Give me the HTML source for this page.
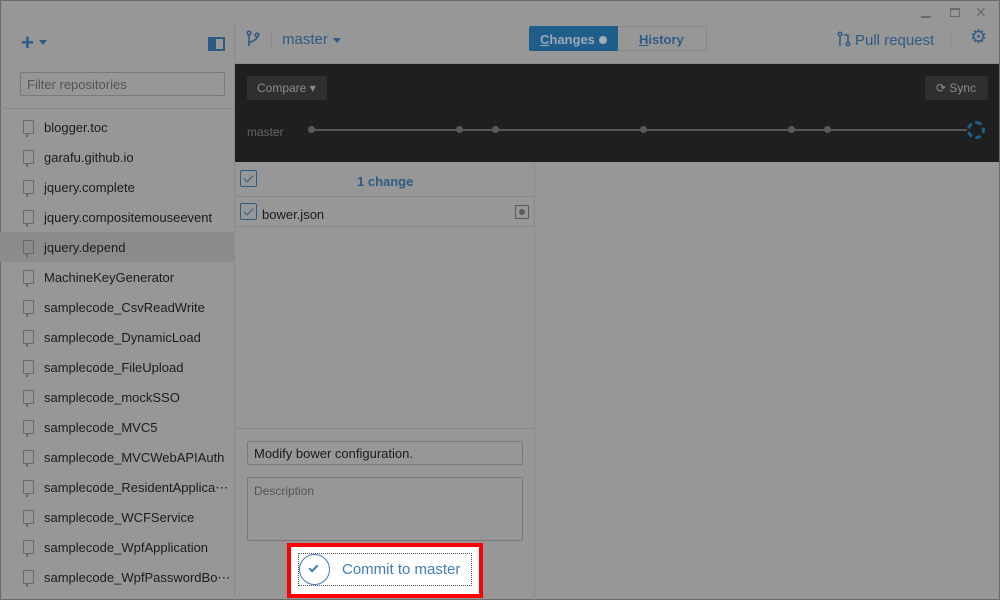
<!DOCTYPE html>
<html><head><style>
*{margin:0;padding:0;box-sizing:border-box}
body{width:1000px;height:600px;background:#979797;font-family:"Liberation Sans",sans-serif;position:relative;overflow:hidden;color:#1c1c1c;font-size:13px}
.abs{position:absolute}
.win{left:0;top:0;width:1000px;height:600px;border:1px solid #6a6a6a}
.row{position:absolute;left:0;width:234px;height:30px;line-height:31px;padding-left:44px;white-space:nowrap}
.row .ic{position:absolute;left:23px;top:8px;width:11px;height:14px;border:1px solid #6a6a6a;border-radius:1px}
.row .ic:after{content:"";position:absolute;left:2px;bottom:-4px;width:2px;height:3px;background:#6a6a6a}
.tick{position:absolute;width:17px;height:17px;border:1px solid #2e5a86;border-radius:2px}
.tick:after{content:"";position:absolute;left:5px;top:2px;width:4px;height:8px;border:solid #2e5a86;border-width:0 1.5px 1.5px 0;transform:rotate(45deg)}
.dot{position:absolute;width:7px;height:7px;border-radius:50%;background:#5a5a5a;top:126px}
</style></head><body>
<div class="abs win"></div>
<div class="abs" style="left:921px;top:16px;width:10px;height:2px;background:#6b6b6b"></div>
<div class="abs" style="left:950px;top:8px;width:10px;height:9px;border:1px solid #6b6b6b;border-top-width:2px"></div>
<div class="abs" style="left:975px;top:4px;font-size:14px;color:#6b6b6b">✕</div>
<div class="abs" style="left:234px;top:22px;width:1px;height:578px;background:#8a8a8a"></div>
<div class="abs" style="left:21px;top:32px;font-size:22px;font-weight:bold;color:#2e5a86;line-height:22px">+</div>
<div class="abs" style="left:39px;top:40px;border:4px solid transparent;border-top:5px solid #2e5a86"></div>
<div class="abs" style="left:208px;top:37px;width:17px;height:14px;border:2px solid #2e5a86"><div style="width:6px;height:100%;background:#2e5a86"></div></div>
<div class="abs" style="left:20px;top:72px;width:205px;height:24px;border:1px solid #7a7a7a;border-radius:2px;padding-left:6px;line-height:23px;color:#555">Filter repositories</div>
<div class="abs" style="left:0;top:108px;width:234px;height:1px;background:#888"></div>
<div class="abs" style="left:0;top:232px;width:234px;height:30px;background:#8b8b8b"></div>
<div class="row" style="top:112px"><span class="ic"></span>blogger.toc</div>
<div class="row" style="top:142px"><span class="ic"></span>garafu.github.io</div>
<div class="row" style="top:172px"><span class="ic"></span>jquery.complete</div>
<div class="row" style="top:202px"><span class="ic"></span>jquery.compositemouseevent</div>
<div class="row" style="top:232px"><span class="ic"></span>jquery.depend</div>
<div class="row" style="top:262px"><span class="ic"></span>MachineKeyGenerator</div>
<div class="row" style="top:292px"><span class="ic"></span>samplecode_CsvReadWrite</div>
<div class="row" style="top:322px"><span class="ic"></span>samplecode_DynamicLoad</div>
<div class="row" style="top:352px"><span class="ic"></span>samplecode_FileUpload</div>
<div class="row" style="top:382px"><span class="ic"></span>samplecode_mockSSO</div>
<div class="row" style="top:412px"><span class="ic"></span>samplecode_MVC5</div>
<div class="row" style="top:442px"><span class="ic"></span>samplecode_MVCWebAPIAuth</div>
<div class="row" style="top:472px"><span class="ic"></span>samplecode_ResidentApplica⋯</div>
<div class="row" style="top:502px"><span class="ic"></span>samplecode_WCFService</div>
<div class="row" style="top:532px"><span class="ic"></span>samplecode_WpfApplication</div>
<div class="row" style="top:562px"><span class="ic"></span>samplecode_WpfPasswordBo⋯</div>
<svg class="abs" style="left:246px;top:30px" width="14" height="18"><g stroke="#2e5a86" stroke-width="1.6" fill="none"><circle cx="3" cy="3" r="1.8"/><circle cx="11" cy="5" r="1.8"/><path d="M3 5v11M11 7c0 4-8 4-8 7"/></g></svg>
<div class="abs" style="left:271px;top:30px;width:1px;height:18px;background:#8a8a8a"></div>
<div class="abs" style="left:282px;top:31px;font-size:15px;color:#2e5a86">master</div>
<div class="abs" style="left:333px;top:38px;border:4px solid transparent;border-top:5px solid #2e5a86"></div>
<div class="abs" style="left:529px;top:26px;width:178px;height:25px;border:1px solid #888;border-radius:2px"></div>
<div class="abs" style="left:529px;top:26px;width:89px;height:25px;background:#1f5e8b;border-radius:2px 0 0 2px;line-height:27px;padding-left:11px;font-weight:bold;color:#9ba9b7"><u>C</u>hanges <span style="display:inline-block;width:8px;height:8px;border-radius:50%;background:#a6adb5"></span></div>
<div class="abs" style="left:639px;top:26px;line-height:27px;font-weight:bold;color:#2e5a86"><u>H</u>istory</div>
<svg class="abs" style="left:837px;top:31px" width="14" height="16"><g stroke="#2e5a86" stroke-width="1.5" fill="none"><circle cx="3" cy="3" r="1.8"/><circle cx="11" cy="13" r="1.8"/><path d="M3 5v10M11 11V4H7"/></g></svg>
<div class="abs" style="left:855px;top:32px;font-size:15px;color:#2e5a86">Pull request</div>
<div class="abs" style="left:950px;top:30px;width:1px;height:18px;background:#8a8a8a"></div>
<div class="abs" style="left:970px;top:26px;font-size:19px;color:#2e5a86">⚙</div>
<div class="abs" style="left:235px;top:63px;width:764px;height:1px;background:#8a8a8a"></div>
<div class="abs" style="left:235px;top:64px;width:764px;height:98px;background:#1f1f1f"></div>
<div class="abs" style="left:247px;top:76px;width:80px;height:24px;background:#2f2f2f;border-radius:2px;color:#8c8c8c;line-height:25px;padding-left:10px;font-size:12px">Compare ▾</div>
<div class="abs" style="left:925px;top:76px;width:63px;height:24px;background:#2f2f2f;border-radius:2px;color:#8c8c8c;line-height:25px;padding-left:11px;font-size:12px">⟳ Sync</div>
<div class="abs" style="left:247px;top:125px;color:#666;font-size:12px">master</div>
<div class="abs" style="left:309px;top:129px;width:658px;height:2px;background:#555"></div>
<div class="dot" style="left:308px"></div><div class="dot" style="left:456px"></div><div class="dot" style="left:492px"></div><div class="dot" style="left:640px"></div><div class="dot" style="left:788px"></div><div class="dot" style="left:824px"></div>
<div class="abs" style="left:967px;top:121px;width:18px;height:18px;border-radius:50%;border:3px dashed #1f5e8b"></div>
<div class="abs" style="left:534px;top:162px;width:1px;height:438px;background:#8a8a8a"></div>
<div class="tick" style="left:240px;top:170px"></div>
<div class="abs" style="left:357px;top:174px;font-weight:bold;color:#2e5a86">1 change</div>
<div class="abs" style="left:235px;top:196px;width:299px;height:1px;background:#888"></div>
<div class="tick" style="left:240px;top:203px"></div>
<div class="abs" style="left:262px;top:207px">bower.json</div>
<div class="abs" style="left:515px;top:205px;width:14px;height:14px;border:1px solid #5a5a5a"><div style="margin:3px;width:6px;height:6px;border-radius:50%;background:#5a5a5a"></div></div>
<div class="abs" style="left:235px;top:226px;width:299px;height:1px;background:#888"></div>
<div class="abs" style="left:235px;top:428px;width:299px;height:1px;background:#888"></div>
<div class="abs" style="left:247px;top:441px;width:276px;height:24px;border:1px solid #7a7a7a;border-radius:2px;padding-left:6px;line-height:23px">Modify bower configuration.</div>
<div class="abs" style="left:247px;top:477px;width:276px;height:64px;border:1px solid #7a7a7a;border-radius:2px;padding:6px 6px;color:#555;font-size:12px">Description</div>
<div class="abs" style="left:287px;top:543px;width:196px;height:55px;background:#fff;border:4px solid #f00"></div>
<div class="abs" style="left:298px;top:553px;width:174px;height:33px;border:1px dotted #555"></div>
<div class="abs" style="left:299px;top:554px;width:31px;height:31px;border-radius:50%;border:1px solid #3d7dbb"></div>
<div class="abs" style="left:311px;top:563px;width:5px;height:9px;border:solid #3d7dbb;border-width:0 2px 2px 0;transform:rotate(45deg)"></div>
<div class="abs" style="left:342px;top:561px;font-size:15px;color:#3d7dbb">Commit to master</div>
</body></html>
